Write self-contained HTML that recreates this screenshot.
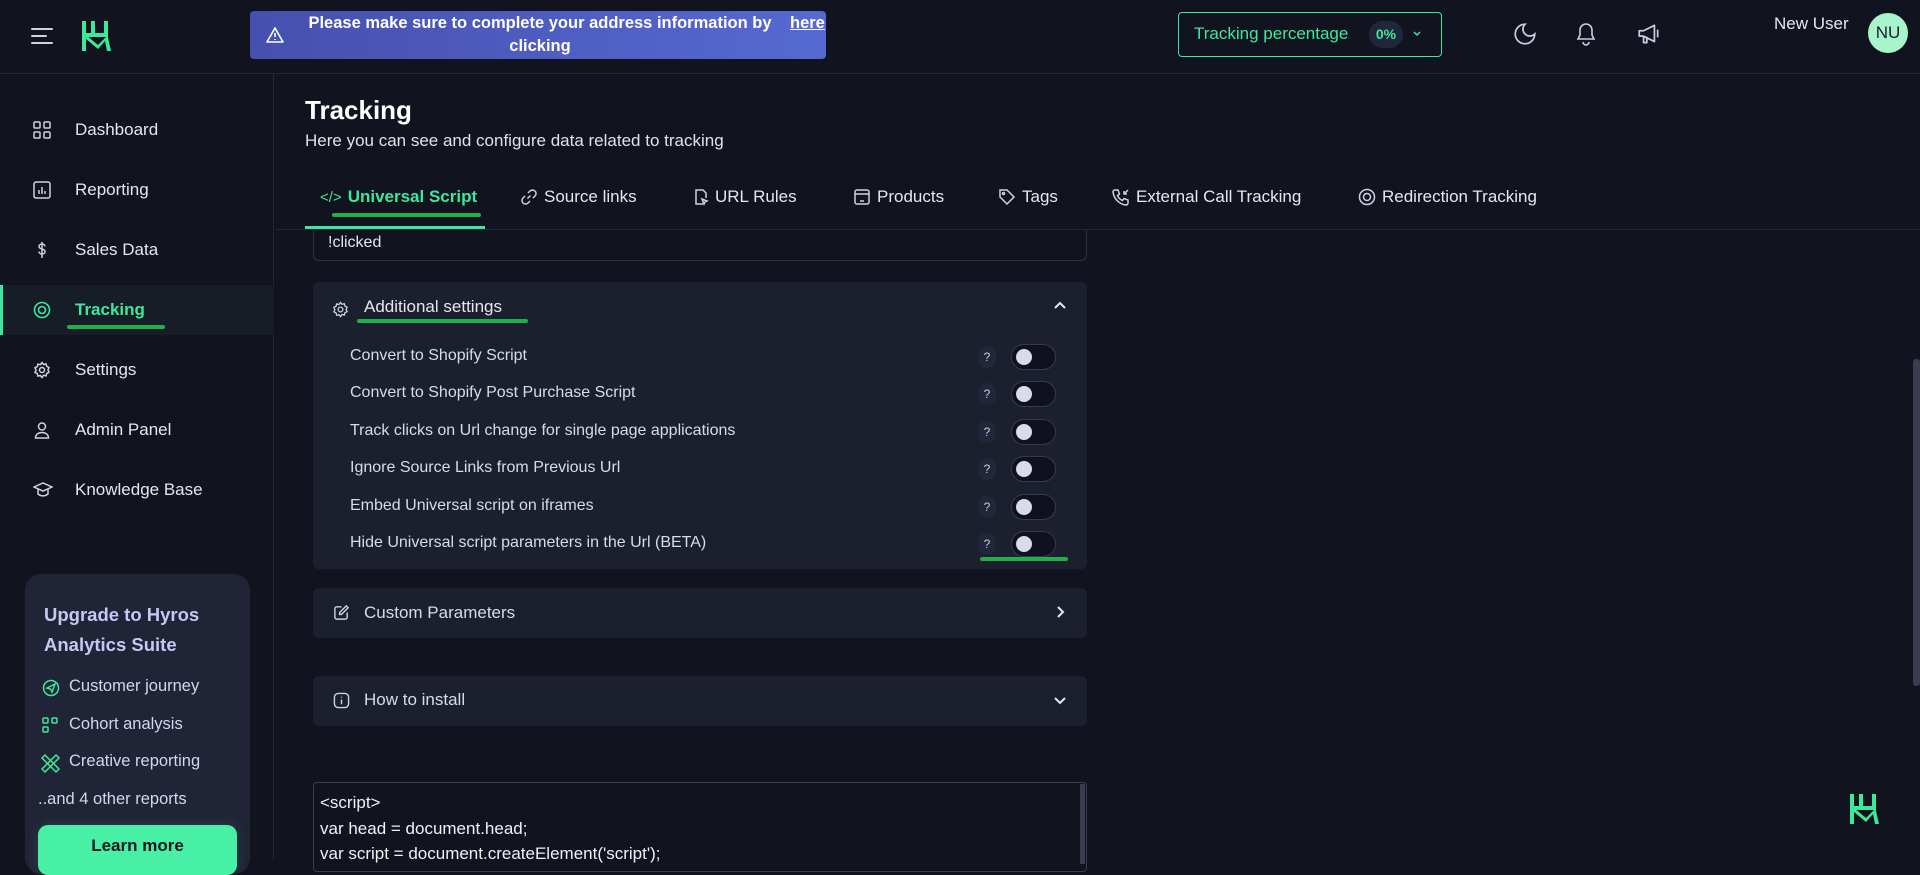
<!DOCTYPE html>
<html><head><meta charset="utf-8"><style>
*{box-sizing:border-box;margin:0;padding:0}
body{width:1920px;height:860px;overflow:hidden;background:#11131f;font-family:"Liberation Sans",sans-serif;color:#dfe2ee;position:relative}
.abs{position:absolute}
svg{display:block}
.hdr{left:0;top:0;width:1920px;height:74px;border-bottom:1px solid #23263a}
.side{left:0;top:74px;width:274px;height:786px;border-right:1px solid #23263a}
.nav{position:absolute;left:0;width:274px;height:48px;display:flex;align-items:center;font-size:17px;color:#e4e6f0}
.nav svg{position:absolute;left:33px}
.nav span{position:absolute;left:75px}
.tab{position:absolute;top:187px;font-size:17px;color:#e4e6f0;display:flex;align-items:center;gap:6px}
.card{position:absolute;left:313px;width:774px;background:#1c1f2e;border-radius:6px}
.row{position:absolute;left:350px;font-size:16px;color:#d8dbe8}
.q{position:absolute;left:978px;width:18px;height:22px;border-radius:9px;background:#22263a;color:#c9ccdb;font-size:12px;text-align:center;line-height:22px}
.tg{position:absolute;left:1011px;width:45px;height:26px;border-radius:13px;background:#0f1120;border:1px solid #353a50}
.tg:after{content:"";position:absolute;left:4px;top:4px;width:16px;height:16px;border-radius:50%;background:#d9dbe7}
.mark{position:absolute;background:#1fb04a;height:4px;border-radius:2px}
</style></head><body>

<div class="abs hdr"></div>
<svg class="abs" style="left:30px;top:26px" width="24" height="20" viewBox="0 0 24 20"><path d="M2 3h20M2 10h14M2 17h20" stroke="#cfd2e0" stroke-width="2" stroke-linecap="round"/></svg>
<svg class="abs" style="left:82px;top:21px" width="30" height="30" viewBox="0 0 30 30"><g fill="#3ee89a"><rect x="0" y="0" width="4" height="30"/><rect x="9" y="0" width="4" height="16"/><rect x="22" y="0" width="4" height="16"/><rect x="0" y="12" width="26" height="4"/><polygon points="4,14 16,24 26,14 26,17 29,30 25,30 23,20 16,28 4,18"/></g></svg>

<div class="abs" style="left:250px;top:11px;width:576px;height:48px;border-radius:4px;background:linear-gradient(90deg,#4650ae,#5669d2)"></div>
<svg class="abs" style="left:266px;top:27px" width="18" height="16" viewBox="0 0 18 16"><path d="M9 1L1 15h16z" fill="none" stroke="#fff" stroke-width="1.6" stroke-linejoin="round"/><path d="M9 6v4M9 12v1" stroke="#fff" stroke-width="1.6"/></svg>
<div class="abs" style="left:300px;top:12px;width:480px;text-align:center;font-size:16.5px;font-weight:bold;color:#fff;line-height:23px">Please make sure to complete your address information by<br>clicking</div>
<div class="abs" style="left:790px;top:12px;font-size:16.5px;font-weight:bold;color:#fff;text-decoration:underline;line-height:23px">here</div>

<div class="abs" style="left:1178px;top:12px;width:264px;height:45px;border:1.5px solid #3ee89a;border-radius:4px"></div>
<div class="abs" style="left:1194px;top:24px;font-size:17px;color:#3ee89a">Tracking percentage</div>
<div class="abs" style="left:1369px;top:21px;width:34px;height:27px;border-radius:14px;background:#22263a;color:#3ee89a;font-size:14px;font-weight:bold;text-align:center;line-height:27px">0%</div>
<svg class="abs" style="left:1412px;top:30px" width="10" height="8" viewBox="0 0 10 8"><path d="M2 2l3 3 3-3" stroke="#3ee89a" stroke-width="1.5" fill="none"/></svg>

<svg class="abs" style="left:1512px;top:21px" width="26" height="26" viewBox="0 0 24 24"><path d="M12 3a6 6 0 0 0 9 9 9 9 0 1 1-9-9z" fill="none" stroke="#c9cce0" stroke-width="1.6"/></svg>
<svg class="abs" style="left:1574px;top:21px" width="24" height="26" viewBox="0 0 24 26"><path d="M12 3a6 6 0 0 1 6 6v5l2 4H4l2-4V9a6 6 0 0 1 6-6zM9 21a3 3 0 0 0 6 0" fill="none" stroke="#c9cce0" stroke-width="1.6"/></svg>
<svg class="abs" style="left:1636px;top:21px" width="26" height="26" viewBox="0 0 24 24"><path d="M3 9v5h4l10 5V4L7 9zM7 14v6h3v-5.5" fill="none" stroke="#c9cce0" stroke-width="1.6" stroke-linejoin="round"/><path d="M20 8v7" stroke="#c9cce0" stroke-width="1.6"/></svg>
<div class="abs" style="left:1774px;top:14px;font-size:17px;color:#e4e6f0">New User</div>
<div class="abs" style="left:1868px;top:13px;width:40px;height:40px;border-radius:50%;background:#a8f5cc;color:#1a1d2a;font-size:17px;text-align:center;line-height:40px">NU</div>

<div class="abs side"></div>
<div class="nav" style="top:106px"><svg width="18" height="18" viewBox="0 0 18 18" fill="none" stroke="#cfd2e0" stroke-width="1.5"><rect x="1" y="1" width="6" height="6" rx="1"/><rect x="11" y="1" width="6" height="6" rx="1"/><rect x="1" y="11" width="6" height="6" rx="1"/><rect x="11" y="11" width="6" height="6" rx="1"/></svg><span>Dashboard</span></div>
<div class="nav" style="top:166px"><svg width="18" height="18" viewBox="0 0 18 18" fill="none" stroke="#cfd2e0" stroke-width="1.5"><rect x="1" y="1" width="16" height="16" rx="2"/><path d="M6 13V9M9 13V6M12 13v-3"/></svg><span>Reporting</span></div>
<div class="nav" style="top:226px"><svg width="18" height="18" viewBox="0 0 18 18" fill="none" stroke="#cfd2e0" stroke-width="1.5"><path d="M12 5.5c0-1.5-1.4-2.5-3-2.5s-3 1-3 2.5 1.4 2 3 2.5 3 1 3 2.5-1.4 2.5-3 2.5-3-1-3-2.5M9 1v16"/></svg><span>Sales Data</span></div>
<div class="abs" style="left:0;top:285px;width:274px;height:50px;background:#161d27"></div>
<div class="abs" style="left:0;top:285px;width:3px;height:50px;background:#3ee89a"></div>
<div class="nav" style="top:286px;color:#3ee89a;font-weight:bold"><svg width="18" height="18" viewBox="0 0 18 18" fill="none" stroke="#3ee89a" stroke-width="1.6"><circle cx="9" cy="9" r="7.5"/><circle cx="9" cy="9" r="3.5"/></svg><span>Tracking</span></div>
<div class="mark" style="left:67px;top:325px;width:98px"></div>
<div class="nav" style="top:346px"><svg width="18" height="18" viewBox="0 0 18 18" fill="none" stroke="#cfd2e0" stroke-width="1.5"><circle cx="9" cy="9" r="2.5"/><path d="M9 1.5l1.6 2 2.5-.6.6 2.5 2.3 1.1-1 2.4 1 2.4-2.3 1.1-.6 2.5-2.5-.6L9 16.5l-1.6-2-2.5.6-.6-2.5L2 11.5l1-2.4-1-2.4 2.3-1.1.6-2.5 2.5.6z"/></svg><span>Settings</span></div>
<div class="nav" style="top:406px"><svg width="18" height="18" viewBox="0 0 18 18" fill="none" stroke="#cfd2e0" stroke-width="1.5"><circle cx="9" cy="5.5" r="3.5"/><path d="M2.5 17c0-3.5 3-5.5 6.5-5.5s6.5 2 6.5 5.5z"/></svg><span>Admin Panel</span></div>
<div class="nav" style="top:466px"><svg width="20" height="18" viewBox="0 0 20 18" fill="none" stroke="#cfd2e0" stroke-width="1.5"><path d="M1 6l9-4 9 4-9 4zM5 8v5c3 2.5 7 2.5 10 0V8"/></svg><span>Knowledge Base</span></div>

<div class="abs" style="left:25px;top:574px;width:225px;height:300px;border-radius:16px;background:#212436"></div>
<div class="abs" style="left:44px;top:600px;font-size:18.5px;font-weight:bold;color:#c3c9f3;line-height:30px">Upgrade to Hyros<br>Analytics Suite</div>
<svg class="abs" style="left:42px;top:679px" width="18" height="18" viewBox="0 0 18 18" fill="none" stroke="#3ee89a" stroke-width="1.5"><circle cx="9" cy="9" r="7.5"/><path d="M5 9l8-4-3 8-1.5-3z"/></svg>
<div class="abs" style="left:69px;top:677px;font-size:16.5px;color:#d2d6ee">Customer journey</div>
<svg class="abs" style="left:42px;top:717px" width="18" height="18" viewBox="0 0 18 18" fill="none" stroke="#3ee89a" stroke-width="1.5"><rect x="1" y="1" width="5" height="5" rx="1"/><rect x="10" y="1" width="5" height="5" rx="1"/><rect x="1" y="10" width="5" height="5" rx="1"/></svg>
<div class="abs" style="left:69px;top:715px;font-size:16.5px;color:#d2d6ee">Cohort analysis</div>
<svg class="abs" style="left:40px;top:753px" width="21" height="21" viewBox="0 0 21 21" fill="none" stroke="#3ee89a" stroke-width="1.5"><path d="M2 5l3-3 14 14-3 3zM19 5l-3-3L2 16l3 3z"/></svg>
<div class="abs" style="left:69px;top:752px;font-size:16.5px;color:#d2d6ee">Creative reporting</div>
<div class="abs" style="left:38px;top:790px;font-size:16.5px;color:#d2d6ee">..and 4 other reports</div>
<div class="abs" style="left:38px;top:825px;width:199px;height:50px;border-radius:10px;background:#48f0a5;box-shadow:0 0 14px rgba(72,240,165,.15)"></div>
<div class="abs" style="left:38px;top:836px;width:199px;text-align:center;font-size:17px;font-weight:bold;color:#14161f">Learn more</div>

<div class="abs" style="left:305px;top:95px;font-size:26px;font-weight:bold;color:#fff">Tracking</div>
<div class="abs" style="left:305px;top:131px;font-size:17px;color:#dfe2ee">Here you can see and configure data related to tracking</div>

<div class="abs" style="left:313px;top:215px;width:774px;height:46px;border:1px solid #2e3245;border-top:none;border-radius:0 0 6px 6px;background:#11131f"></div>
<div class="abs" style="left:275px;top:215px;width:1645px;height:15px;background:#11131f"></div>
<div class="abs" style="left:275px;top:229px;width:1645px;height:1px;background:#23263a"></div>
<div class="abs" style="left:305px;top:226px;width:180px;height:3px;background:#3ee89a"></div>
<div class="tab" style="left:320px;color:#3ee89a;font-weight:bold"><span style="font-weight:normal;font-size:15px">&lt;/&gt;</span>Universal Script</div>
<div class="mark" style="left:332px;top:213px;width:149px"></div>
<div class="tab" style="left:520px"><svg width="18" height="18" viewBox="0 0 18 18" fill="none" stroke="#cfd2e0" stroke-width="1.5"><path d="M7.5 10.5l3-3M8 5l2-2a3 3 0 0 1 5 5l-2 2M10 13l-2 2a3 3 0 0 1-5-5l2-2"/></svg>Source links</div>
<div class="tab" style="left:693px"><svg width="16" height="18" viewBox="0 0 16 18" fill="none" stroke="#cfd2e0" stroke-width="1.5"><path d="M10 16H3V2h7l3 3v5M9 11l2 5 1-2 2-1z"/></svg>URL Rules</div>
<div class="tab" style="left:853px"><svg width="18" height="18" viewBox="0 0 18 18" fill="none" stroke="#cfd2e0" stroke-width="1.5"><rect x="2" y="2" width="14" height="14" rx="2"/><path d="M2 6h14M7 13h4"/></svg>Products</div>
<div class="tab" style="left:998px"><svg width="18" height="18" viewBox="0 0 18 18" fill="none" stroke="#cfd2e0" stroke-width="1.5"><path d="M2 9V2h7l7 7-7 7z"/><circle cx="5.5" cy="5.5" r="1"/></svg>Tags</div>
<div class="tab" style="left:1112px"><svg width="18" height="18" viewBox="0 0 18 18" fill="none" stroke="#cfd2e0" stroke-width="1.5"><path d="M3 2h3l1.5 4-2 1.5a9 9 0 0 0 5 5l1.5-2 4 1.5v3a2 2 0 0 1-2 2A15 15 0 0 1 1 4a2 2 0 0 1 2-2zM16 2l-4 4M12 3v3h3"/></svg>External Call Tracking</div>
<div class="tab" style="left:1358px"><svg width="18" height="18" viewBox="0 0 18 18" fill="none" stroke="#cfd2e0" stroke-width="1.5"><circle cx="9" cy="9" r="7.5"/><circle cx="9" cy="9" r="3.5"/></svg>Redirection Tracking</div>

<div class="abs" style="left:328px;top:234px;font-size:16px;color:#e4e6f0">!clicked</div>

<div class="card" style="top:282px;height:287px"></div>
<svg class="abs" style="left:332px;top:301px" width="17" height="17" viewBox="0 0 18 18" fill="none" stroke="#cfd2e0" stroke-width="1.4"><circle cx="9" cy="9" r="2.5"/><path d="M9 1.5l1.6 2 2.5-.6.6 2.5 2.3 1.1-1 2.4 1 2.4-2.3 1.1-.6 2.5-2.5-.6L9 16.5l-1.6-2-2.5.6-.6-2.5L2 11.5l1-2.4-1-2.4 2.3-1.1.6-2.5 2.5.6z"/></svg>
<div class="abs" style="left:364px;top:297px;font-size:17px;color:#e4e6f0">Additional settings</div>
<div class="mark" style="left:357px;top:319px;width:171px"></div>
<svg class="abs" style="left:1053px;top:300px" width="14" height="10" viewBox="0 0 14 10"><path d="M2 8l5-5 5 5" stroke="#e4e6f0" stroke-width="2" fill="none"/></svg>

<div class="row" style="top:347px">Convert to Shopify Script</div><div class="q" style="top:346px">?</div><div class="tg" style="top:344px"></div>
<div class="row" style="top:384px">Convert to Shopify Post Purchase Script</div><div class="q" style="top:383px">?</div><div class="tg" style="top:381px"></div>
<div class="row" style="top:422px">Track clicks on Url change for single page applications</div><div class="q" style="top:421px">?</div><div class="tg" style="top:419px"></div>
<div class="row" style="top:459px">Ignore Source Links from Previous Url</div><div class="q" style="top:458px">?</div><div class="tg" style="top:456px"></div>
<div class="row" style="top:497px">Embed Universal script on iframes</div><div class="q" style="top:496px">?</div><div class="tg" style="top:494px"></div>
<div class="row" style="top:534px">Hide Universal script parameters in the Url (BETA)</div><div class="q" style="top:533px">?</div><div class="tg" style="top:531px"></div>
<div class="mark" style="left:980px;top:557px;width:88px"></div>

<div class="card" style="top:588px;height:50px"></div>
<svg class="abs" style="left:333px;top:604px" width="17" height="17" viewBox="0 0 18 18" fill="none" stroke="#cfd2e0" stroke-width="1.5"><path d="M9 3H4a2 2 0 0 0-2 2v9a2 2 0 0 0 2 2h9a2 2 0 0 0 2-2V9M7 11V9l7-7 2 2-7 7z"/></svg>
<div class="abs" style="left:364px;top:603px;font-size:17px;color:#d8dbe8">Custom Parameters</div>
<svg class="abs" style="left:1056px;top:605px" width="10" height="14" viewBox="0 0 10 14"><path d="M2 2l5 5-5 5" stroke="#e4e6f0" stroke-width="2" fill="none"/></svg>

<div class="card" style="top:676px;height:50px"></div>
<svg class="abs" style="left:333px;top:692px" width="17" height="17" viewBox="0 0 18 18" fill="none" stroke="#cfd2e0" stroke-width="1.5"><rect x="1.5" y="1.5" width="15" height="15" rx="4"/><path d="M9 8v5M9 5v1"/></svg>
<div class="abs" style="left:364px;top:690px;font-size:17px;color:#d8dbe8">How to install</div>
<svg class="abs" style="left:1053px;top:696px" width="14" height="10" viewBox="0 0 14 10"><path d="M2 2l5 5 5-5" stroke="#e4e6f0" stroke-width="2" fill="none"/></svg>

<div class="abs" style="left:313px;top:782px;width:774px;height:90px;border:1px solid #3a3e52;border-radius:4px;background:#11131f"></div>
<div class="abs" style="left:1080px;top:784px;width:5px;height:80px;background:#3a3d50"></div>
<div class="abs" style="left:320px;top:790px;font-size:17px;color:#f0f1f6;line-height:25.5px">&lt;script&gt;<br>var head = document.head;<br>var script = document.createElement('script');</div>

<div class="abs" style="left:1913px;top:359px;width:7px;height:327px;background:#3a3d50;border-radius:3px"></div>
<svg class="abs" style="left:1850px;top:794px" width="30" height="30" viewBox="0 0 30 30"><g fill="#3ee89a"><rect x="0" y="0" width="4" height="30"/><rect x="9" y="0" width="4" height="16"/><rect x="22" y="0" width="4" height="16"/><rect x="0" y="12" width="26" height="4"/><polygon points="4,14 16,24 26,14 26,17 29,30 25,30 23,20 16,28 4,18"/></g></svg>
</body></html>
